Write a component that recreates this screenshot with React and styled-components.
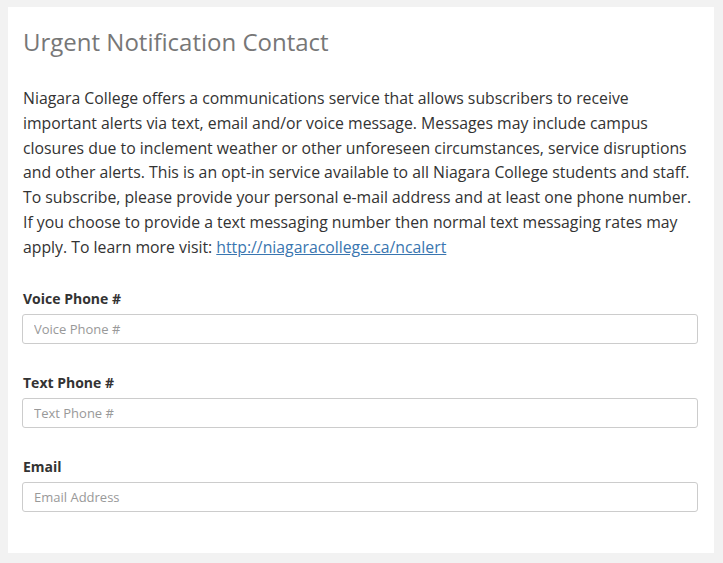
import React from "react";
import styled, { createGlobalStyle } from "styled-components";

const Global = createGlobalStyle`
  html, body { margin: 0; padding: 0; background: #f2f2f2; }
  body { font-family: "Open Sans", "Liberation Sans", sans-serif; }
  * { box-sizing: border-box; }
`;

const Page = styled.div`
  padding: 7px 9px 11px 8px;
`;

const Card = styled.div`
  background: #fff;
  padding: 21px 16px 41px 14px;
`;

const Title = styled.h1`
  margin: 0 0 30px 1px;
  font-size: 24px;
  font-weight: 400;
  line-height: 28px;
  color: #777;
`;

const Intro = styled.p`
  margin: 0 0 29px 1px;
  font-size: 15.8px;
  line-height: 24.8px;
  color: #333;
`;

const Link = styled.a`
  color: #3a76b0;
  text-decoration: underline;
`;

const Field = styled.div`
  display: flex;
  flex-direction: column;
  gap: 5px;
  margin-bottom: 29px;
  &:last-child { margin-bottom: 0; }
`;

const Label = styled.label`
  font-size: 14px;
  font-weight: 700;
  line-height: 20px;
  margin-left: 1px;
  color: #333;
`;

const Input = styled.input`
  display: block;
  width: 100%;
  height: 30px;
  padding: 0 11px;
  font-family: "Open Sans", "Liberation Sans", sans-serif;
  font-size: 13px;
  color: #555;
  background: #fff;
  border: 1px solid #ccc;
  border-radius: 3px;
  outline: none;
  &::placeholder { color: #999; }
`;

const fields = [
  { id: "voice", label: "Voice Phone #", placeholder: "Voice Phone #" },
  { id: "text", label: "Text Phone #", placeholder: "Text Phone #" },
  { id: "email", label: "Email", placeholder: "Email Address" },
];

export default function App() {
  return (
    <>
      <Global />
      <Page>
        <Card>
          <Title>Urgent Notification Contact</Title>
          <Intro>
            Niagara College offers a communications service that allows subscribers to receive
            important alerts via text, email and/or voice message. Messages may include campus
            closures due to inclement weather or other unforeseen circumstances, service disruptions
            and other alerts. This is an opt-in service available to all Niagara College students and staff.
            To subscribe, please provide your personal e-mail address and at least one phone number.
            If you choose to provide a text messaging number then normal text messaging rates may
            apply. To learn more visit:{" "}
            <Link href="#">http://niagaracollege.ca/ncalert</Link>
          </Intro>
          {fields.map((f) => (
            <Field key={f.id}>
              <Label htmlFor={f.id}>{f.label}</Label>
              <Input id={f.id} placeholder={f.placeholder} />
            </Field>
          ))}
        </Card>
      </Page>
    </>
  );
}
